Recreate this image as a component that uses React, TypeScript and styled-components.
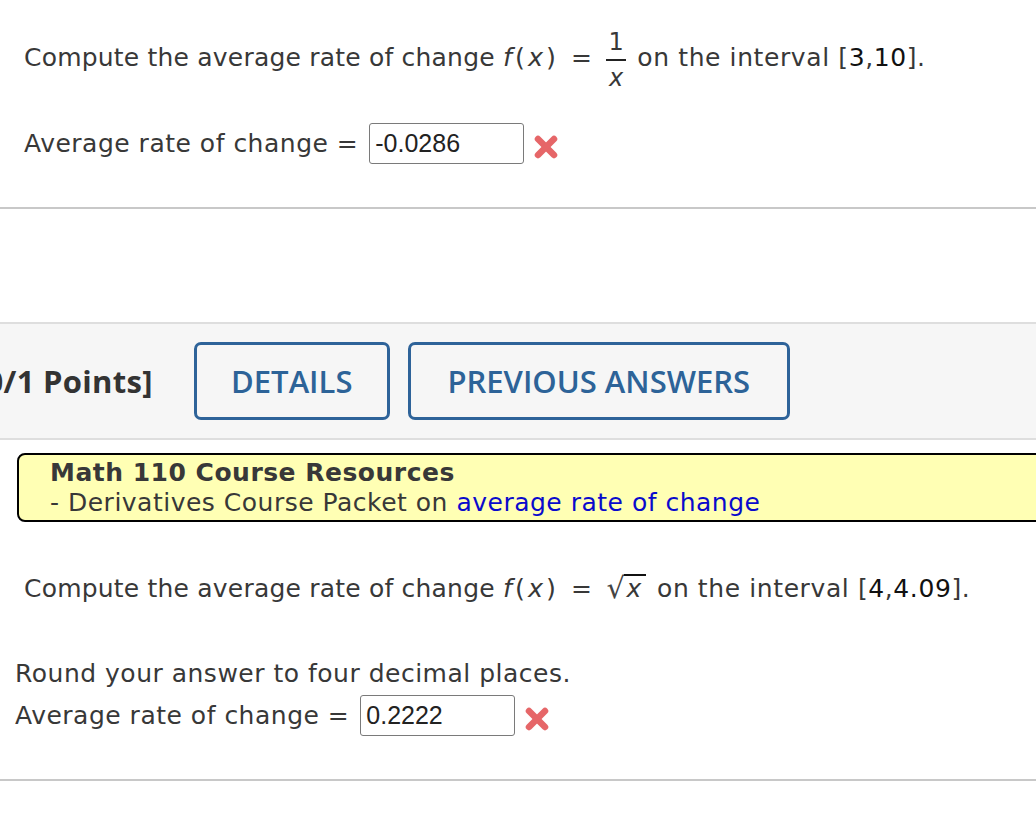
import React from "react";
import styled, { createGlobalStyle } from "styled-components";

const Global = createGlobalStyle`
  html, body { margin: 0; padding: 0; background: #fff; }
  body { font-family: "DejaVu Sans", Verdana, sans-serif; color: #383838; }
  #root { width: 1036px; height: 818px; overflow: hidden; }
`;

const Page = styled.div`
  width: 1036px;
  overflow: hidden;
  font-size: 25px;
  letter-spacing: 0.5px;
`;

const Section = styled.section<{ $pad: number }>`
  padding-left: ${(p) => p.$pad}px;
`;

const QuestionLine = styled.div<{ $top: number; $indent?: number }>`
  display: flex;
  align-items: center;
  height: 60px;
  margin-top: ${(p) => p.$top}px;
  padding-left: ${(p) => p.$indent ?? 0}px;
  white-space: pre;
  letter-spacing: 0.6px;
`;

const Lead = styled.span`
  letter-spacing: 0.2px;
`;

const FnCall = styled.span`
  display: inline-flex;
  gap: 3px;
  letter-spacing: 0;
  font-size: 25.5px;
`;

const Italic = styled.span`
  font-style: italic;
`;

const Num = styled.span`
  color: #111;
`;

const Eq = styled.span`
  margin: 0 14px 0 15px;
`;

const Frac = styled.span`
  display: inline-flex;
  flex-direction: column;
  align-items: center;
  margin: 6px 11px 0 0;
  line-height: 1;
`;

const FracTop = styled.span`
  padding: 0 2px 5px;
  border-bottom: 2px solid #222;
  font-size: 24px;
`;

const FracBottom = styled.span`
  padding-top: 5px;
  font-style: italic;
  font-size: 24px;
`;

const Sqrt = styled.span`
  display: inline-flex;
  align-items: flex-end;
  margin-right: 11px;
`;

const Radical = styled.span`
  font-size: 29px;
  line-height: 1;
  margin-right: -2px;
  color: #444;
`;

const Radicand = styled.span`
  font-style: italic;
  border-top: 2px solid #111;
  padding: 0 4px 0 3px;
  line-height: 1.05;
`;

const PlainLine = styled.div<{ $top: number }>`
  margin-top: ${(p) => p.$top}px;
  line-height: 40px;
  height: 40px;
`;

const AnswerRow = styled.div<{ $top: number }>`
  display: flex;
  align-items: center;
  height: 41px;
  margin-top: ${(p) => p.$top}px;
  white-space: pre;
`;

const AnswerBox = styled.div`
  box-sizing: border-box;
  width: 155px;
  height: 41px;
  border: 1px solid #7a7a7a;
  border-radius: 3px;
  padding-left: 5px;
  margin-left: 11px;
  display: flex;
  align-items: center;
  font-family: "Liberation Sans", Arial, sans-serif;
  font-size: 25px;
  letter-spacing: 0;
  color: #222;
`;

const Wrong = styled.svg`
  margin-left: 9px;
  margin-top: 6px;
`;

const Rule = styled.hr<{ $top: number }>`
  margin: ${(p) => p.$top}px 0 0;
  border: 0;
  height: 2px;
  background: #c8c8c8;
`;

const Band = styled.div`
  margin-top: 113px;
  height: 114px;
  background: #f6f6f6;
  border-top: 2px solid #dedede;
  border-bottom: 2px solid #dedede;
  display: flex;
  align-items: center;
`;

const Points = styled.span`
  font-family: "Open Sans", sans-serif;
  font-weight: 700;
  font-size: 31px;
  letter-spacing: 0.3px;
  color: #333;
  margin-left: -25px;
  margin-right: 41px;
  white-space: pre;
`;

const ActionButton = styled.button<{ $w: number }>`
  box-sizing: border-box;
  width: ${(p) => p.$w}px;
  height: 78px;
  margin-right: 18px;
  flex-shrink: 0;
  background: #f6f6f6;
  border: 3px solid #2e6399;
  border-radius: 7px;
  font-family: "Open Sans", sans-serif;
  font-weight: 600;
  font-size: 31px;
  color: #2d6398;
  padding: 0;
`;

const Resources = styled.div`
  box-sizing: border-box;
  margin: 13px -20px 0 17px;
  height: 69px;
  background: #ffffb4;
  border: 2px solid #000;
  border-radius: 8px;
  padding: 3px 0 0 31px;
  line-height: 30px;
  font-size: 25px;
  letter-spacing: 0.5px;
  color: #383838;
`;

const ResTitle = styled.div`
  font-weight: 700;
`;

const ResLink = styled.a`
  color: #0a0acc;
  text-decoration: none;
`;

function RedX() {
  return (
    <Wrong width="26" height="26" viewBox="0 0 26 26">
      <g stroke="#e45a5c" strokeWidth="6.5" strokeLinecap="round" opacity="0.92">
        <line x1="5" y1="5" x2="21" y2="21" />
        <line x1="21" y1="5" x2="5" y2="21" />
      </g>
    </Wrong>
  );
}

function Fx() {
  return (
    <FnCall>
      <Italic>f</Italic>
      <span>(</span>
      <Italic>x</Italic>
      <span>)</span>
    </FnCall>
  );
}

export default function App() {
  return (
    <Page>
      <Global />
      <Section $pad={24}>
        <QuestionLine $top={27}>
          <Lead>{"Compute the average rate of change "}</Lead>
          <Fx />
          <Eq>=</Eq>
          <Frac>
            <FracTop>1</FracTop>
            <FracBottom>x</FracBottom>
          </Frac>
          {"on the interval ["}
          <Num>3</Num>,<Num>10</Num>
          {"]."}
        </QuestionLine>
        <AnswerRow $top={36}>
          {"Average rate of change ="}
          <AnswerBox>-0.0286</AnswerBox>
          <RedX />
        </AnswerRow>
      </Section>
      <Rule $top={43} />
      <Band>
        <Points>[0/1 Points]</Points>
        <ActionButton $w={196}>DETAILS</ActionButton>
        <ActionButton $w={382}>PREVIOUS ANSWERS</ActionButton>
      </Band>
      <Resources>
        <ResTitle>Math 110 Course Resources</ResTitle>
        <div>
          {"- Derivatives Course Packet on "}
          <ResLink href="#">average rate of change</ResLink>
        </div>
      </Resources>
      <Section $pad={15}>
        <QuestionLine $top={36} $indent={9}>
          <Lead>{"Compute the average rate of change "}</Lead>
          <Fx />
          <Eq>=</Eq>
          <Sqrt>
            <Radical>√</Radical>
            <Radicand>x</Radicand>
          </Sqrt>
          {"on the interval ["}
          <Num>4</Num>,<Num>4.09</Num>
          {"]."}
        </QuestionLine>
        <PlainLine $top={36}>Round your answer to four decimal places.</PlainLine>
        <AnswerRow $top={1}>
          {"Average rate of change ="}
          <AnswerBox>0.2222</AnswerBox>
          <RedX />
        </AnswerRow>
      </Section>
      <Rule $top={43} />
    </Page>
  );
}
